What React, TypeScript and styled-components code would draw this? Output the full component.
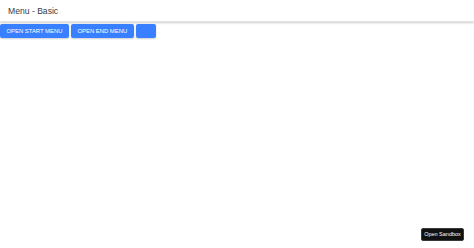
import { createGlobalStyle, styled } from 'styled-components'

const GlobalStyle = createGlobalStyle`
  html, body {
    margin: 0;
    padding: 0;
    background: #ffffff;
  }
  body {
    font-family: "Liberation Sans", Arial, sans-serif;
  }
`

export default function App() {
  return (
    <Page>
      <GlobalStyle />
      <Header>
        <Title>Menu - Basic</Title>
      </Header>
      <Content>
        <Button>Open Start Menu</Button>
        <Button>Open End Menu</Button>
        <Button $empty />
      </Content>
      <SandboxButton>Open Sandbox</SandboxButton>
    </Page>
  )
}

const Page = styled.div`
  position: relative;
  width: 474px;
  height: 248px;
  overflow: hidden;
`

const Header = styled.header`
  height: 21px;
  display: flex;
  align-items: center;
  padding: 0 8px;
  box-shadow: 0 1px 2px rgba(0, 0, 0, 0.2);
  border-bottom: 1px solid #e4e4e4;
`

const Title = styled.h1`
  margin: 0;
  font-family: "Liberation Sans", Arial, sans-serif;
  font-size: 8.6px;
  font-weight: 400;
  color: #3a3a3a;
`

const Content = styled.main`
  display: flex;
  gap: 2px;
  padding-top: 2px;
`

const Button = styled.button<{ $empty?: boolean }>`
  height: 14px;
  width: ${(p) => (p.$empty ? '20px' : 'auto')};
  padding: 0 6.5px;
  border: none;
  border-radius: 2px;
  background: #3880ff;
  color: #ffffff;
  font-family: "Liberation Sans", Arial, sans-serif;
  font-size: 5.9px;
  font-weight: 400;
  text-transform: uppercase;
  box-shadow: 0 1px 2px rgba(0, 0, 0, 0.2);
  line-height: 14px;
`

const SandboxButton = styled.button`
  position: absolute;
  left: 421px;
  top: 228px;
  width: 43px;
  height: 13px;
  padding: 0;
  border: 1px solid #3a3a3a;
  border-radius: 2px;
  background: #111111;
  color: #ffffff;
  font-family: "Liberation Sans", Arial, sans-serif;
  font-size: 5.5px;
  line-height: 11px;
`
